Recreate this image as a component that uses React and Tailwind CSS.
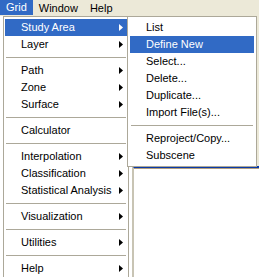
import React from "react";

const MAIN_ITEMS = [
  { label: "Study Area", sub: true, active: true },
  { label: "Layer", sub: true },
  { sep: true },
  { label: "Path", sub: true },
  { label: "Zone", sub: true },
  { label: "Surface", sub: true },
  { sep: true },
  { label: "Calculator" },
  { sep: true },
  { label: "Interpolation", sub: true },
  { label: "Classification", sub: true },
  { label: "Statistical Analysis", sub: true },
  { sep: true },
  { label: "Visualization", sub: true },
  { sep: true },
  { label: "Utilities", sub: true },
  { sep: true },
  { label: "Help", sub: true },
];

const SUB_ITEMS = [
  { label: "List" },
  { label: "Define New", active: true },
  { label: "Select..." },
  { label: "Delete..." },
  { label: "Duplicate..." },
  { label: "Import File(s)..." },
  { sep: true },
  { label: "Reproject/Copy..." },
  { label: "Subscene" },
];

function Arrow({ white }) {
  return (
    <svg width="4" height="7" viewBox="0 0 4 7" className="shrink-0">
      <polygon points="0,0 4,3.5 0,7" fill={white ? "#ffffff" : "#000000"} />
    </svg>
  );
}

function MenuList({ items }) {
  return items.map((item, i) =>
    item.sep ? (
      <div key={i} className="flex h-[9px] items-center px-[1px]">
        <div className="h-px w-full bg-[#aca899]" />
      </div>
    ) : (
      <div
        key={i}
        className={`flex h-[17px] items-center justify-between pl-[16px] pr-[4px] ${
          item.active ? "bg-[#316ac5] text-white" : "text-black"
        }`}
      >
        <span className="leading-none">{item.label}</span>
        {item.sub ? <Arrow white={item.active} /> : null}
      </div>
    )
  );
}

export default function App() {
  return (
    <div className="relative h-[277px] w-[259px] overflow-hidden bg-white font-['Liberation_Sans',Arial,sans-serif] text-[11px]">
      <div className="flex h-[16px] items-center bg-[#ece9d8] text-black">
        <div className="flex h-[15px] items-center self-start bg-[#316ac5] px-[6px] text-white">Grid</div>
        <div className="px-[6px]">Window</div>
        <div className="px-[6px]">Help</div>
      </div>

      {/* window behind the menus */}
      <div className="absolute left-[132px] right-0 top-[166px] bottom-0 border-l-2 border-t-2 border-l-[#c8c4b4] border-t-[#0a3aa8]">
        <div className="h-px bg-[#b09c7c]" />
      </div>
      <div className="absolute right-0 top-[16px] h-[150px] w-[3px] bg-[#ece9d8]" />

      <div className="absolute left-[3px] top-[16px] h-[270px] w-[126px] border border-[#aca899] bg-white px-[1px] pt-[2px]">
        <MenuList items={MAIN_ITEMS} />
      </div>

      <div className="absolute left-[127px] top-[16px] w-[130px] border border-[#aca899] bg-white px-[2px] py-[2px]">
        <MenuList items={SUB_ITEMS} />
      </div>
    </div>
  );
}
